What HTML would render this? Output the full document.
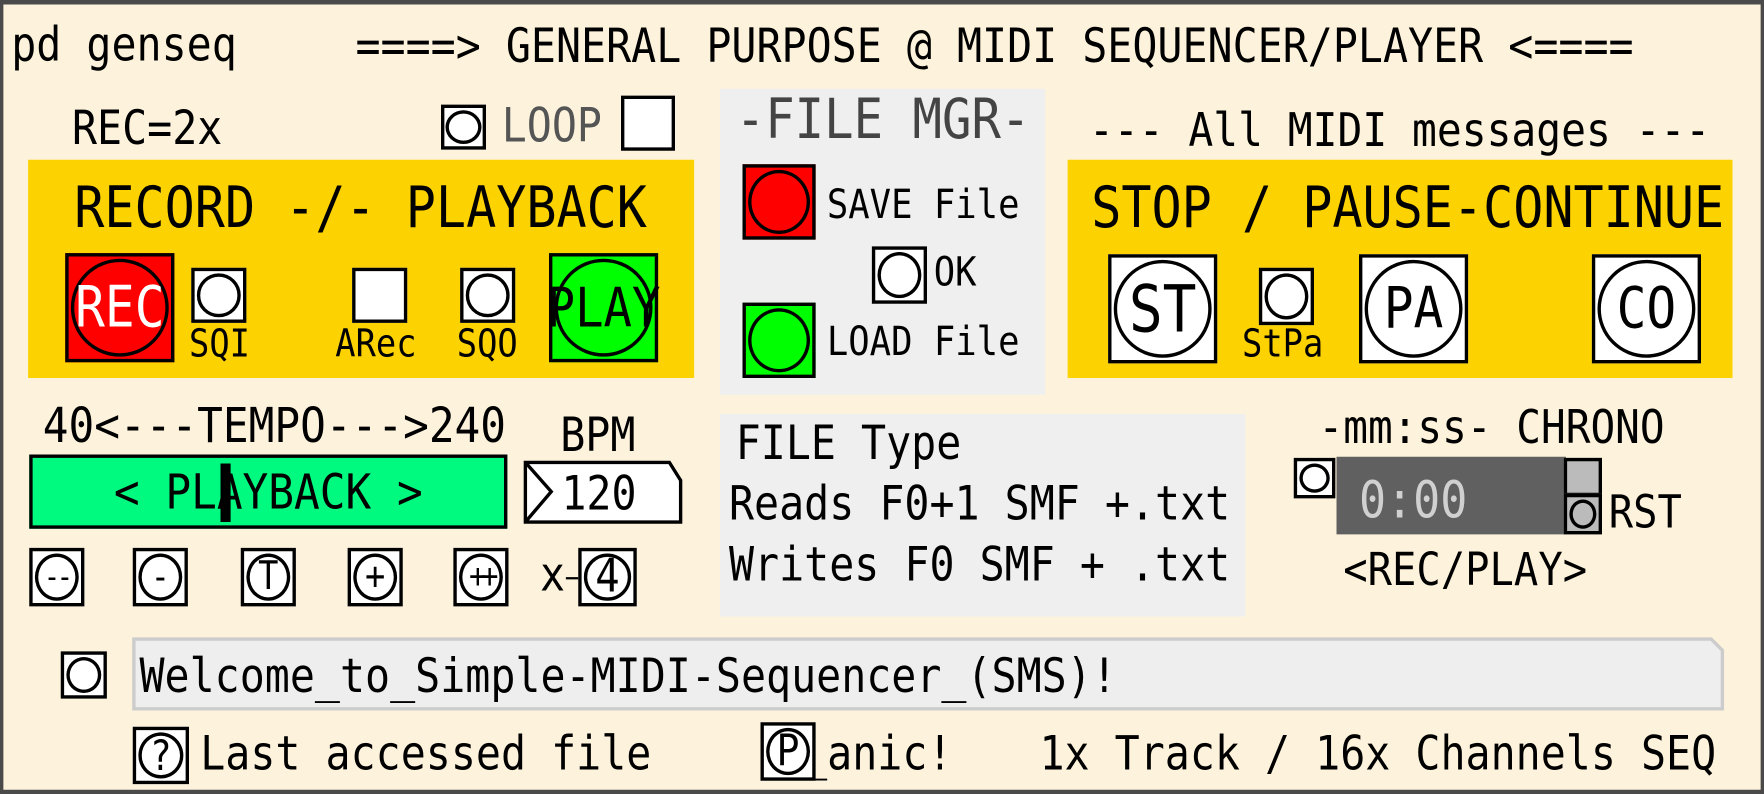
<!DOCTYPE html>
<html><head><meta charset="utf-8"><style>
html,body{margin:0;padding:0;width:1764px;height:794px;overflow:hidden;background:#555}
#w{position:absolute;left:0;top:0;width:1568px;height:706px;transform:scale(1.125);transform-origin:0 0;background:#fdf3dc;box-sizing:border-box;border:3px solid #4a4a4a;border-top-width:4px;border-bottom-width:4px}
.a{position:absolute;box-sizing:border-box}
.t{position:absolute;font-family:"DejaVu Sans Mono","Liberation Mono",monospace;font-size:37px;line-height:1;white-space:pre;color:#000;transform:scaleY(1.13);transform-origin:0 85%}
.box{position:absolute;box-sizing:border-box;border:3px solid #000;background:#fff}
.c{position:absolute;left:2px;top:2px;right:2px;bottom:2px;border:3px solid #000;border-radius:50%;box-sizing:border-box;display:flex;align-items:center;justify-content:center;font-family:"DejaVu Sans Mono",monospace;line-height:1;white-space:nowrap;overflow:visible}
.c span{display:inline-block;transform:scaleY(1.15)}
</style></head><body><div id="w">
<div class="t" style="left:7px;top:19px">pd genseq</div>
<div class="t" style="left:313px;top:20px">====&gt; GENERAL PURPOSE @ MIDI SEQUENCER/PLAYER &lt;====</div>

<div class="t" style="left:61px;top:93px">REC=2x</div>
<div class="box" style="left:389px;top:89px;width:40px;height:40px"><div class="c" style="left:1px;right:1px"></div></div>
<div class="t" style="left:443px;top:91px;color:#555">LOOP</div>
<div class="box" style="left:549px;top:81px;width:48px;height:49px"></div>

<div class="a" style="left:22px;top:138px;width:592px;height:194px;background:#fcd200"></div>
<div class="t" style="left:63px;top:162px;font-size:44.5px">RECORD -/- PLAYBACK</div>
<div class="box" style="left:55px;top:221px;width:97px;height:97px;background:#f00"><div class="c" style="color:#fff;font-size:44px"><span>REC</span></div></div>
<div class="box" style="left:167px;top:234px;width:49px;height:49px"><div class="c"></div></div>
<div class="t" style="left:165px;top:289px;font-size:30px">SQI</div>
<div class="box" style="left:310px;top:234px;width:49px;height:49px"></div>
<div class="t" style="left:295px;top:289px;font-size:30px">ARec</div>
<div class="box" style="left:406px;top:234px;width:49px;height:49px"><div class="c"></div></div>
<div class="t" style="left:403px;top:289px;font-size:30px">SQO</div>
<div class="box" style="left:485px;top:221px;width:97px;height:97px;background:#0f0"><div class="c" style="font-size:42px"><span>PLAY</span></div></div>

<div class="a" style="left:637px;top:75px;width:289px;height:272px;background:#efefef"></div>
<div class="t" style="left:651px;top:84px;font-size:43.5px;color:#444">-FILE MGR-</div>
<div class="box" style="left:657px;top:142px;width:65px;height:67px;background:#f00"><div class="c"></div></div>
<div class="t" style="left:732px;top:165px;font-size:31.6px">SAVE File</div>
<div class="box" style="left:772px;top:215px;width:49px;height:51px"><div class="c"></div></div>
<div class="t" style="left:827px;top:225px;font-size:31.6px">OK</div>
<div class="box" style="left:657px;top:265px;width:65px;height:67px;background:#0f0"><div class="c"></div></div>
<div class="t" style="left:732px;top:287px;font-size:31.6px">LOAD File</div>

<div class="t" style="left:965px;top:96px;font-size:36.7px">--- All MIDI messages ---</div>
<div class="a" style="left:946px;top:138px;width:591px;height:194px;background:#fcd200"></div>
<div class="t" style="left:967px;top:162px;font-size:44.5px">STOP / PAUSE-CONTINUE</div>
<div class="box" style="left:982px;top:222px;width:97px;height:97px"><div class="c" style="font-size:50px"><span>ST</span></div></div>
<div class="box" style="left:1116px;top:234px;width:49px;height:51px"><div class="c"></div></div>
<div class="t" style="left:1101px;top:289px;font-size:30px">StPa</div>
<div class="box" style="left:1205px;top:222px;width:97px;height:97px"><div class="c" style="font-size:44px"><span>PA</span></div></div>
<div class="box" style="left:1412px;top:222px;width:97px;height:97px"><div class="c" style="font-size:44px"><span>CO</span></div></div>

<div class="t" style="left:35px;top:357px;font-size:38px">40&lt;---TEMPO---&gt;240</div>
<div class="t" style="left:495px;top:366px;font-size:37px">BPM</div>
<div class="a" style="left:23px;top:400px;width:425px;height:66px;background:#00fa80;border:3px solid #000"></div>
<div class="t" style="left:23px;top:416px;width:425px;text-align:center;font-size:38px">&lt; PLAYBACK &gt;</div>
<div class="a" style="left:193px;top:408px;width:9px;height:52px;background:#000"></div>
<svg class="a" style="left:461px;top:404px" width="145" height="60"><path d="M3 3 H131 L141 19 V56 H3 Z" fill="#fff" stroke="#000" stroke-width="3"/><path d="M3 3 L26 29 L3 56" fill="none" stroke="#000" stroke-width="3"/></svg>
<div class="t" style="left:496px;top:418px;font-size:37px">120</div>

<div class="box" style="left:23px;top:483px;width:49px;height:52px"><div class="c" style="font-size:24px;letter-spacing:-3px"><span>--</span></div></div>
<div class="box" style="left:115px;top:483px;width:49px;height:52px"><div class="c" style="font-size:28px"><span>-</span></div></div>
<div class="box" style="left:211px;top:483px;width:49px;height:52px"><div class="c" style="font-size:30px"><span>T</span></div></div>
<div class="box" style="left:306px;top:483px;width:49px;height:52px"><div class="c" style="font-size:30px"><span>+</span></div></div>
<div class="box" style="left:400px;top:483px;width:49px;height:52px"><div class="c" style="font-size:26px;letter-spacing:-5px"><span>++</span></div></div>
<div class="t" style="left:477px;top:490px">x</div>
<div class="a" style="left:500px;top:509px;width:12px;height:2px;background:#000"></div>
<div class="box" style="left:511px;top:483px;width:52px;height:52px"><div class="c" style="font-size:36px"><span>4</span></div></div>

<div class="a" style="left:637px;top:364px;width:467px;height:180px;background:#efefef"></div>
<div class="t" style="left:651px;top:373px">FILE Type</div>
<div class="t" style="left:645px;top:427px">Reads F0+1 SMF +.txt</div>
<div class="t" style="left:645px;top:481px">Writes F0 SMF + .txt</div>

<div class="t" style="left:1169px;top:360px;font-size:36.5px">-mm:ss- CHRONO</div>
<div class="box" style="left:1147px;top:403px;width:37px;height:36px"><div class="c"></div></div>
<div class="a" style="left:1185px;top:402px;width:204px;height:69px;background:#606060"></div>
<div class="t" style="left:1205px;top:423px;font-size:40px;color:#d0d0d0">0:00</div>
<div class="box" style="left:1387px;top:403px;width:34px;height:34px;background:#bbb"></div>
<div class="box" style="left:1387px;top:435px;width:34px;height:36px;background:#bbb"><div class="c"></div></div>
<div class="t" style="left:1427px;top:436px;font-size:36px">RST</div>
<div class="t" style="left:1191px;top:487px;font-size:36px">&lt;REC/PLAY&gt;</div>

<div class="box" style="left:51px;top:575px;width:41px;height:42px"><div class="c"></div></div>
<svg class="a" style="left:114px;top:562px" width="1420" height="68"><path d="M2 2 H1404 L1414 12 V64 H2 Z" fill="#eee" stroke="#ccc" stroke-width="3"/></svg>
<div class="t" style="left:121px;top:580px">Welcome_to_Simple-MIDI-Sequencer_(SMS)!</div>

<div class="box" style="left:115px;top:642px;width:50px;height:51px"><div class="c" style="font-size:32px"><span>?</span></div></div>
<div class="t" style="left:175px;top:649px">Last accessed file</div>
<div class="box" style="left:673px;top:638px;width:49px;height:52px"><div class="c" style="font-size:34px"><span>P</span></div></div>
<div class="t" style="left:710px;top:649px">_anic!</div>
<div class="t" style="left:921px;top:649px">1x Track / 16x Channels SEQ</div>
</div></body></html>
